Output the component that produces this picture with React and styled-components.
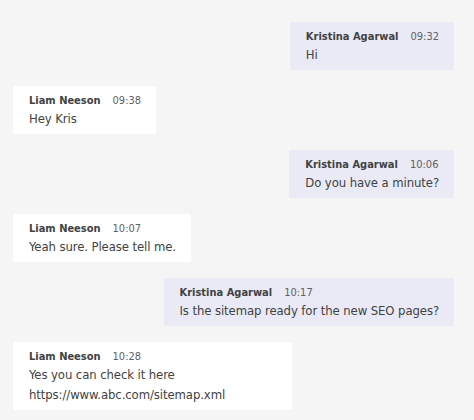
import React from "react";
import styled, { createGlobalStyle } from "styled-components";

const GlobalStyle = createGlobalStyle`
  html, body {
    margin: 0;
    padding: 0;
    background: #f5f5f5;
  }
  body {
    font-family: "DejaVu Sans Condensed", "DejaVu Sans", sans-serif;
    font-stretch: condensed;
    color: #424242;
  }
`;

const Chat = styled.div`
  width: 474px;
  height: 420px;
  box-sizing: border-box;
  padding: 22px 20px 0 13px;
  display: flex;
  flex-direction: column;
  gap: 16px;
  background: #f5f5f5;
  overflow: hidden;
`;

const Bubble = styled.div`
  align-self: ${(p) => (p.$mine ? "flex-end" : "flex-start")};
  background: ${(p) => (p.$mine ? "#e9eaf6" : "#ffffff")};
  min-width: ${(p) => p.$minWidth || 0}px;
  box-sizing: border-box;
  padding: 6px 15px 5px 16px;
  border-radius: 2px;
`;

const Header = styled.div`
  display: flex;
  align-items: baseline;
  gap: 12px;
  line-height: 17px;
`;

const Name = styled.span`
  font-size: 11px;
  font-weight: 700;
  color: #424242;
`;

const Time = styled.span`
  font-size: 11px;
  color: #616161;
`;

const Text = styled.div`
  font-size: 13px;
  letter-spacing: -0.1px;
  line-height: 20px;
  color: #424242;
`;

const messages = [
  { mine: true, name: "Kristina Agarwal", time: "09:32", text: ["Hi"] },
  { mine: false, name: "Liam Neeson", time: "09:38", text: ["Hey Kris"] },
  { mine: true, name: "Kristina Agarwal", time: "10:06", text: ["Do you have a minute?"] },
  { mine: false, name: "Liam Neeson", time: "10:07", text: ["Yeah sure. Please tell me."] },
  {
    mine: true,
    name: "Kristina Agarwal",
    time: "10:17",
    text: ["Is the sitemap ready for the new SEO pages?"],
  },
  {
    mine: false,
    name: "Liam Neeson",
    time: "10:28",
    text: ["Yes you can check it here", "https://www.abc.com/sitemap.xml"],
    minWidth: 279,
  },
];

export default function App() {
  return (
    <>
      <GlobalStyle />
      <Chat>
        {messages.map((m, i) => (
          <Bubble key={i} $mine={m.mine} $minWidth={m.minWidth}>
            <Header>
              <Name>{m.name}</Name>
              <Time>{m.time}</Time>
            </Header>
            {m.text.map((line, j) => (
              <Text key={j}>{line}</Text>
            ))}
          </Bubble>
        ))}
      </Chat>
    </>
  );
}
